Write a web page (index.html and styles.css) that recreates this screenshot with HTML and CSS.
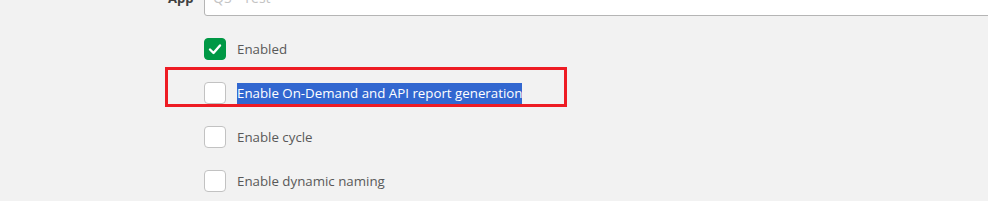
FILE: index.html
```html
<!DOCTYPE html>
<html>
<head>
<meta charset="utf-8">
<link rel="stylesheet" href="styles.css">
</head>
<body>
<div class="page">
  <div class="field">
    <label class="field-label">App</label>
    <div class="input">QS - Test</div>
  </div>
  <div class="options">
    <div class="option">
      <span class="box checked">
        <svg viewBox="0 0 22 22" width="22" height="22"><path d="M6 11.5 L9.5 15 L16 7.5" fill="none" stroke="#fff" stroke-width="2.4" stroke-linecap="round" stroke-linejoin="round"/></svg>
      </span>
      <span class="text">Enabled</span>
    </div>
    <div class="option highlight">
      <span class="box"></span>
      <span class="text selected">Enable On-Demand and API report generation</span>
    </div>
    <div class="option">
      <span class="box"></span>
      <span class="text">Enable cycle</span>
    </div>
    <div class="option">
      <span class="box"></span>
      <span class="text">Enable dynamic naming</span>
    </div>
  </div>
</div>
</body>
</html>
```
FILE: styles.css
```css
html, body {
  margin: 0;
  padding: 0;
  background: #f2f2f2;
  overflow: hidden;
}
body {
  width: 988px;
  height: 201px;
  font-family: "Open Sans", "Noto Sans", sans-serif;
}
.page {
  margin-top: -21px;
}
.field {
  display: flex;
  align-items: center;
  padding-left: 168px;
}
.field-label {
  width: 36px;
  font-size: 13px;
  font-weight: 700;
  color: #404040;
}
.input {
  box-sizing: border-box;
  flex: 1;
  height: 37px;
  margin-right: -10px;
  background: #fff;
  border: 1px solid #b5b5b5;
  border-radius: 3px;
  padding-left: 8px;
  line-height: 35px;
  font-size: 14px;
  color: #c4c4c4;
}
.options {
  display: flex;
  flex-direction: column;
  gap: 22px;
  margin-top: 22px;
  padding-left: 204px;
}
.option {
  display: flex;
  align-items: center;
  height: 22px;
  position: relative;
}
.option.highlight::before {
  content: "";
  position: absolute;
  left: -39px;
  top: -15px;
  width: 396px;
  height: 34px;
  border: 3px solid #ee1c24;
}
.box {
  box-sizing: border-box;
  width: 22px;
  height: 22px;
  border: 1px solid #c2c2c2;
  border-radius: 4px;
  background: #fff;
  display: flex;
}
.box.checked {
  background: #009845;
  border-color: #009845;
}
.box.checked svg {
  margin: -1px;
}
.text {
  margin-left: 11px;
  font-size: 13.3px;
  color: #595959;
  line-height: 21px;
}
.text.selected {
  background: #3267d0;
  color: #fff;
}
```
